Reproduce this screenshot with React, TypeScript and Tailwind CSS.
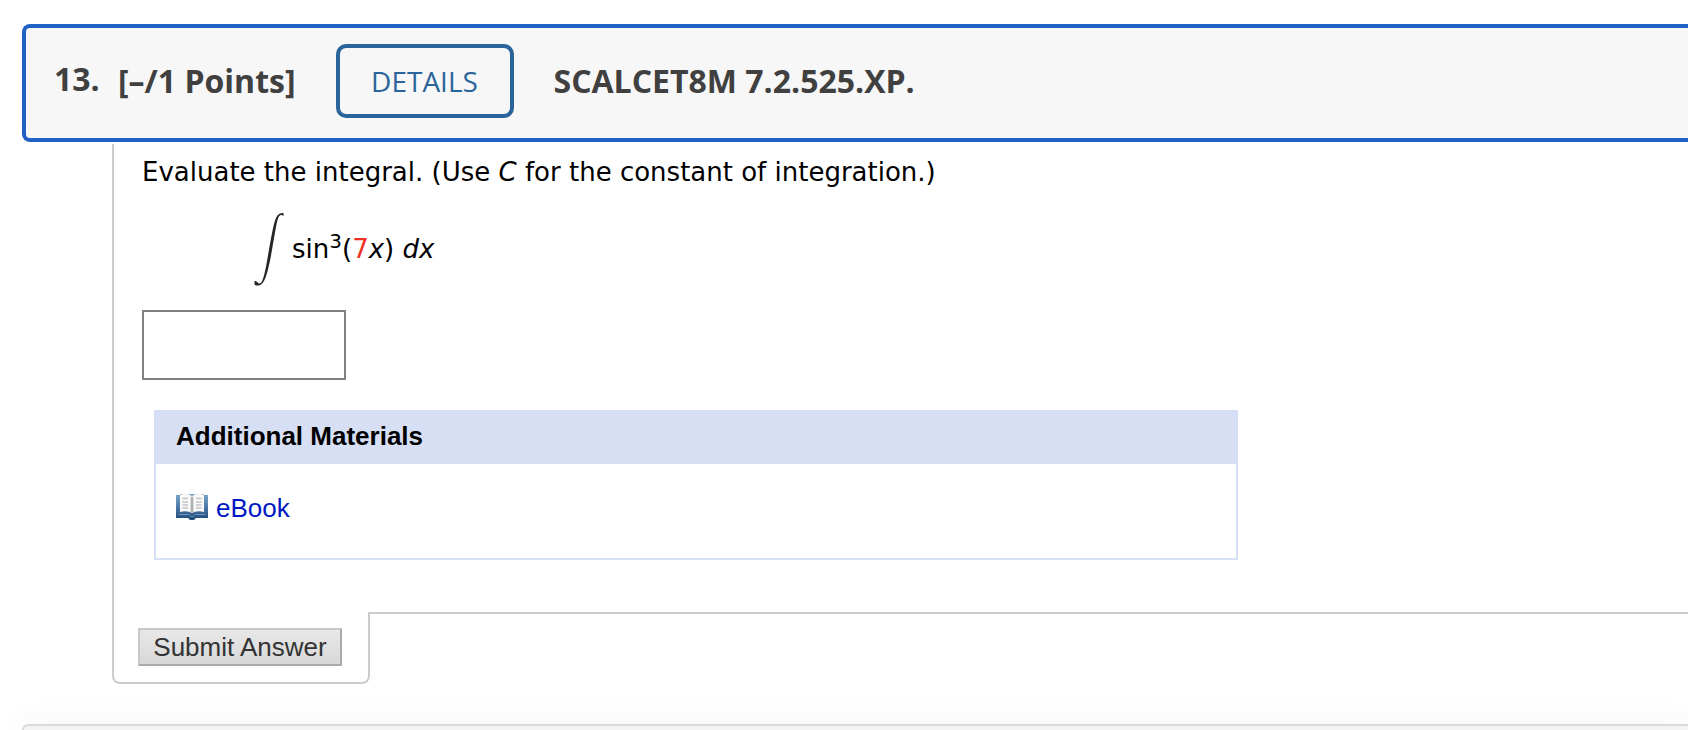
import { useState } from "react";

function IntegralSign() {
  return (
    <svg viewBox="0 0 30 74" className="h-[74px] w-[30px]" aria-label="integral" role="img">
      <path
        d="M0.5 69.5 C2 68 3.5 71 5 71.6 C8 72 9.5 66 11.5 57 C14 45 17 24 20 12 C22 4 24.5 0.5 29.5 1 L29.5 4 C27 2 25 2.5 23.5 8 C21 18 18 41 15 53 C12 67 9 73.5 4 73.5 C2 73.5 0.5 73 0.5 72 Z"
        className="fill-neutral-800"
      />
    </svg>
  );
}

function BookIcon() {
  return (
    <svg viewBox="0 0 32 29" className="h-[29px] w-8 shrink-0" aria-hidden="true">
      <defs>
        <linearGradient id="cover" x1="0" y1="0" x2="0" y2="1">
          <stop offset="0" stopColor="#7fa6ca" />
          <stop offset="0.5" stopColor="#4b79aa" />
          <stop offset="1" stopColor="#1f4976" />
        </linearGradient>
        <linearGradient id="fold" x1="0" y1="0" x2="1" y2="0">
          <stop offset="0" stopColor="#f4f4f4" />
          <stop offset="0.5" stopColor="#9b9b9b" />
          <stop offset="1" stopColor="#f4f4f4" />
        </linearGradient>
      </defs>
      <path d="M0 3 H4 V2 H28 V3 H32 V26 H20 L18 28 H14 L12 26 H0 Z" fill="url(#cover)" />
      <path d="M4 3 Q10 0 16 4 Q22 0 28 3 V20 Q21 18 16 21 Q11 18 4 20 Z" fill="#f8f8f8" />
      <path d="M14 4 L16 5 L18 4 V20 L16 21 L14 20 Z" fill="url(#fold)" />
      <path
        d="M6.5 6.5 H12 M6.5 10 H12 M6.5 13 H12 M6.5 16 H12 M20 6.5 H25.5 M20 10 H25.5 M20 13 H25.5 M20 16 H25.5"
        stroke="#c2c2c2"
        strokeWidth="1.4"
      />
      <path d="M3 22.5 H13 L15 24.5 H17 L19 22.5 H29" stroke="#6d93b9" fill="none" />
    </svg>
  );
}

export default function App() {
  const [answer, setAnswer] = useState("");

  return (
    <main className="flex min-h-screen flex-col overflow-hidden bg-white pt-6 text-[26px] leading-8 text-black">
      {/* Question header */}
      <header className="ml-[22px] flex h-[118px] items-center rounded-l-lg border-4 border-r-0 border-[#2160c4] bg-[#f7f7f7] pb-1 pl-7 font-['Open_Sans',sans-serif] text-[32px] font-bold text-[#404040]">
        <span className="w-16 pb-1">13.</span>
        <span className="mr-10">[–/1 Points]</span>
        <button className="mr-10 flex h-[74px] w-[178px] items-center justify-center rounded-[10px] border-4 border-[#29659a] text-[28px] font-medium text-[#29659a]">
          DETAILS
        </button>
        <h1>SCALCET8M 7.2.525.XP.</h1>
      </header>

      {/* Question body */}
      <section className="mt-0.5 ml-28 h-[468px] border-l-2 border-[#cccccc] pt-3 pl-7 font-['DejaVu_Sans',sans-serif]">
        <p>
          <label htmlFor="answer">
            Evaluate the integral. (Use <i>C</i> for the constant of integration.)
          </label>
        </p>

        <div className="mt-6 ml-28 flex items-center gap-2">
          <IntegralSign />
          <p>
            sin<sup className="text-[20px] leading-none">3</sup>(<span className="text-[#ee3124]">7</span>
            <i>x</i>) <i>dx</i>
          </p>
        </div>

        <input
          id="answer"
          value={answer}
          onChange={(e) => setAnswer(e.target.value)}
          className="mt-6 block h-[70px] w-[204px] border-2 border-[#808080] bg-white px-3 outline-none"
        />

        {/* Additional materials */}
        <div className="mt-[30px] ml-3 max-w-[1084px] border-2 border-[#d7dff4] font-['Liberation_Sans',Arial,sans-serif]">
          <h2 className="bg-[#d7dff4] px-5 pt-2 pb-3 font-bold">Additional Materials</h2>
          <div className="flex h-[94px] items-start px-5 pt-7">
            <a href="#ebook" className="flex gap-2 text-[#0018c4]">
              <BookIcon />
              eBook
            </a>
          </div>
        </div>
      </section>

      {/* Submit tab */}
      <div className="ml-28 flex">
        <div className="h-[72px] w-[258px] rounded-b-lg border-2 border-t-0 border-[#cccccc] pt-4 pl-6">
          <button className="flex h-[38px] w-[204px] items-center justify-center border-2 border-t-[#c8c8c8] border-r-[#aaaaaa] border-b-[#aaaaaa] border-l-[#c8c8c8] bg-linear-to-b from-[#e8e8e8] to-[#d8d8d8] font-['Liberation_Sans',Arial,sans-serif] text-[#333333]">
            Submit Answer
          </button>
        </div>
        <div className="flex-1 border-t-2 border-[#cccccc]" />
      </div>

      {/* Top edge of the next question */}
      <div className="mt-10 ml-[22px] flex-1 rounded-tl-md border-t-2 border-l-2 border-[#dadada] bg-[#f3f3f3] shadow-[0_0_28px_rgba(0,0,0,0.12)]" />
    </main>
  );
}
